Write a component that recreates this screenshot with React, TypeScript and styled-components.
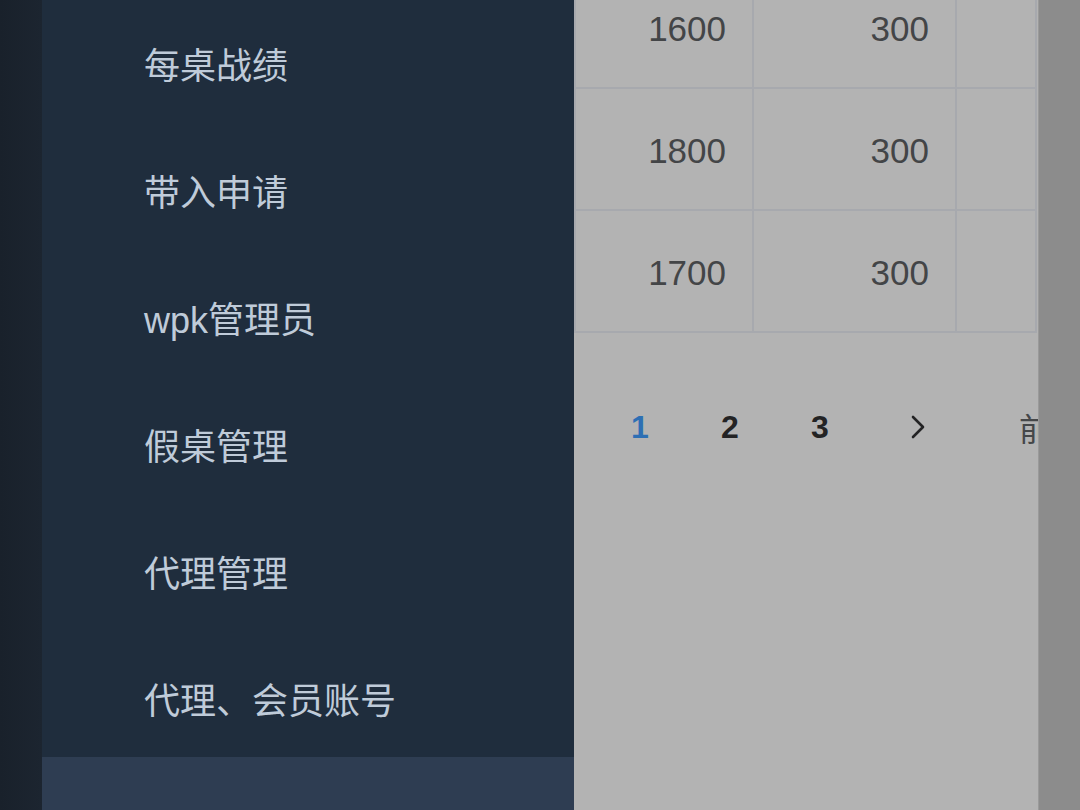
import React from "react";
import styled, { createGlobalStyle } from "styled-components";

const Global = createGlobalStyle`
  html, body { margin: 0; padding: 0; background: #b3b3b3; }
  body { font-family: "Liberation Sans", "Noto Sans CJK SC", sans-serif; }
  * { box-sizing: border-box; }
`;

const Page = styled.div`
  display: flex;
  width: 1080px;
  height: 810px;
  overflow: hidden;
`;

const Gutter = styled.div`
  width: 42px;
  flex: none;
  background: linear-gradient(90deg, #19212b 0%, #1c2530 100%);
`;

const Sidebar = styled.nav`
  width: 532px;
  flex: none;
  background: #1f2d3d;
  overflow: hidden;
`;

const MenuList = styled.ul`
  list-style: none;
  margin: -5px 0 0 0;
  padding: 0;
`;

const MenuItem = styled.li<{ $active?: boolean }>`
  height: 127px;
  display: flex;
  align-items: center;
  padding: 8px 0 0 102px;
  font-family: "Liberation Sans", "Noto Sans CJK SC", sans-serif;
  font-size: 36px;
  color: #bfcbd9;
  background: ${(p) => (p.$active ? "#2e3d52" : "transparent")};
  white-space: nowrap;
`;

const Main = styled.main`
  flex: 1;
  min-width: 0;
  background: #b3b3b3;
  display: flex;
  flex-direction: column;
  overflow: hidden;
`;

const Table = styled.div`
  margin-top: -33px;
  display: grid;
  grid-template-columns: 178px 203px 80px;
  border-left: 2px solid #a7a9ae;
  width: max-content;
`;

const Cell = styled.div`
  height: 122px;
  border-right: 2px solid #a7a9ae;
  border-bottom: 2px solid #a7a9ae;
  display: flex;
  align-items: center;
  justify-content: flex-end;
  padding: 4px 26px 0 0;
  font-family: "Liberation Sans", sans-serif;
  font-size: 35px;
  color: #434547;
`;

const Pager = styled.div`
  margin-top: 64px;
  height: 60px;
  display: flex;
  align-items: center;
  padding-left: 36px;
  gap: 30px;
`;

const PageBtn = styled.button<{ $active?: boolean }>`
  flex: none;
  width: 60px;
  height: 60px;
  border: none;
  background: transparent;
  padding: 0;
  display: flex;
  align-items: center;
  justify-content: center;
  font-family: "Liberation Sans", sans-serif;
  font-weight: 700;
  font-size: 32px;
  color: ${(p) => (p.$active ? "#2d6fb4" : "#232324")};
`;

const NextBtn = styled(PageBtn)`
  margin-left: 8px;
  color: #232324;
`;

const Jumper = styled.span`
  flex: none;
  margin-left: 41px;
  font-family: "Liberation Sans", "Noto Sans CJK SC", sans-serif;
  font-size: 32px;
  color: #454749;
  white-space: nowrap;
`;

const RightStrip = styled.div`
  width: 42px;
  flex: none;
  background: #8c8c8c;
  border-left: 1px solid #9a9a9a;
`;

const menu = ["每桌战绩", "带入申请", "wpk管理员", "假桌管理", "代理管理", "代理、会员账号", ""];
const rows = [
  ["1600", "300", ""],
  ["1800", "300", ""],
  ["1700", "300", ""],
];

export default function App() {
  return (
    <>
      <Global />
      <Page>
        <Gutter />
        <Sidebar>
          <MenuList>
            {menu.map((m, i) => (
              <MenuItem key={i} $active={i === menu.length - 1}>
                {m}
              </MenuItem>
            ))}
          </MenuList>
        </Sidebar>
        <Main>
          <Table>
            {rows.map((r, i) =>
              r.map((c, j) => <Cell key={`${i}-${j}`}>{c}</Cell>)
            )}
          </Table>
          <Pager>
            <PageBtn $active>1</PageBtn>
            <PageBtn>2</PageBtn>
            <PageBtn>3</PageBtn>
            <NextBtn aria-label="next">
              <svg width="16" height="26" viewBox="0 0 16 26" fill="none">
                <path d="M3 3 L13 13 L3 23" stroke="#232324" strokeWidth="2.6" strokeLinecap="round" strokeLinejoin="round" />
              </svg>
            </NextBtn>
            <Jumper>前往</Jumper>
          </Pager>
        </Main>
        <RightStrip />
      </Page>
    </>
  );
}
